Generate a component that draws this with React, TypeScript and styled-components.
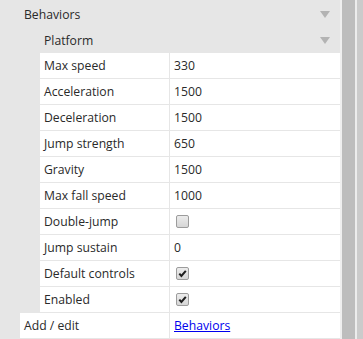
import React from "react";
import styled, { createGlobalStyle } from "styled-components";

const GlobalStyle = createGlobalStyle`
  html, body {
    margin: 0;
    padding: 0;
    background: #e6e6e6;
  }
  body {
    font-family: "Open Sans", "Noto Sans", sans-serif;
    font-size: 12px;
    color: #2a2a2a;
  }
`;

const Frame = styled.div`
  width: 363px;
  height: 339px;
  display: flex;
  overflow: hidden;
  background: #e6e6e6;
`;

const Grid = styled.div`
  width: 340px;
  display: flex;
  flex-direction: column;
  padding-top: 1px;
`;

const Gutter = styled.div`
  width: 2px;
  background: #efefef;
`;

const ScrollThumb = styled.div`
  width: 13px;
  background: #bdbdbd;
`;

const ScrollGap = styled.div`
  width: 2px;
  background: #ececec;
`;

const ScrollTrack = styled.div`
  flex: 1;
  background: #cbcbcb;
`;

const Section = styled.div<{ $indent: number }>`
  height: 26px;
  display: flex;
  align-items: center;
  justify-content: space-between;
  padding-left: ${(p) => p.$indent + 4}px;
  padding-right: 10px;
  font-size: 12.2px;
`;

const Arrow = styled.span`
  width: 0;
  height: 0;
  border-left: 5px solid transparent;
  border-right: 5px solid transparent;
  border-top: 7px solid #b3b3b3;
`;

const Row = styled.div<{ $indent: number }>`
  height: 25px;
  margin-left: ${(p) => p.$indent}px;
  border-bottom: 1px solid #e6e6e6;
  display: grid;
  grid-template-columns: ${(p) => 130 + (40 - p.$indent)}px 1fr;
  background: #fff;
`;

const Label = styled.div`
  display: flex;
  align-items: center;
  padding-left: 4px;
  border-right: 1px solid #e6e6e6;
  font-size: 12.2px;
`;

const Value = styled.div`
  display: flex;
  align-items: center;
  padding-left: 4px;
  font-size: 12.2px;
`;

const Check = styled.span`
  width: 11px;
  height: 11px;
  margin-left: 2px;
  border: 1px solid #9c9c9c;
  border-radius: 2px;
  background: linear-gradient(#ececec, #d6d6d6);
  display: flex;
  align-items: center;
  justify-content: center;
`;

const LinkText = styled.a`
  color: #0000ee;
  text-decoration: underline;
  cursor: pointer;
`;

type Prop = { label: string; value?: string; check?: boolean };

const props: Prop[] = [
  { label: "Max speed", value: "330" },
  { label: "Acceleration", value: "1500" },
  { label: "Deceleration", value: "1500" },
  { label: "Jump strength", value: "650" },
  { label: "Gravity", value: "1500" },
  { label: "Max fall speed", value: "1000" },
  { label: "Double-jump", check: false },
  { label: "Jump sustain", value: "0" },
  { label: "Default controls", check: true },
  { label: "Enabled", check: true },
];

const Tick = () => (
  <svg width="9" height="9" viewBox="0 0 9 9">
    <path d="M1.3 4.6 L3.4 7 L7.8 1.8" fill="none" stroke="#1e1e1e" strokeWidth="2" />
  </svg>
);

export default function App() {
  return (
    <>
      <GlobalStyle />
      <Frame>
        <Grid>
          <Section $indent={20}>
            <span>Behaviors</span>
            <Arrow />
          </Section>
          <Section $indent={40}>
            <span>Platform</span>
            <Arrow />
          </Section>
          {props.map((p) => (
            <Row $indent={40} key={p.label}>
              <Label>{p.label}</Label>
              <Value>
                {p.check === undefined ? p.value : <Check>{p.check && <Tick />}</Check>}
              </Value>
            </Row>
          ))}
          <Row $indent={20}>
            <Label>Add / edit</Label>
            <Value>
              <LinkText>Behaviors</LinkText>
            </Value>
          </Row>
        </Grid>
        <Gutter />
        <ScrollThumb />
        <ScrollGap />
        <ScrollTrack />
      </Frame>
    </>
  );
}
